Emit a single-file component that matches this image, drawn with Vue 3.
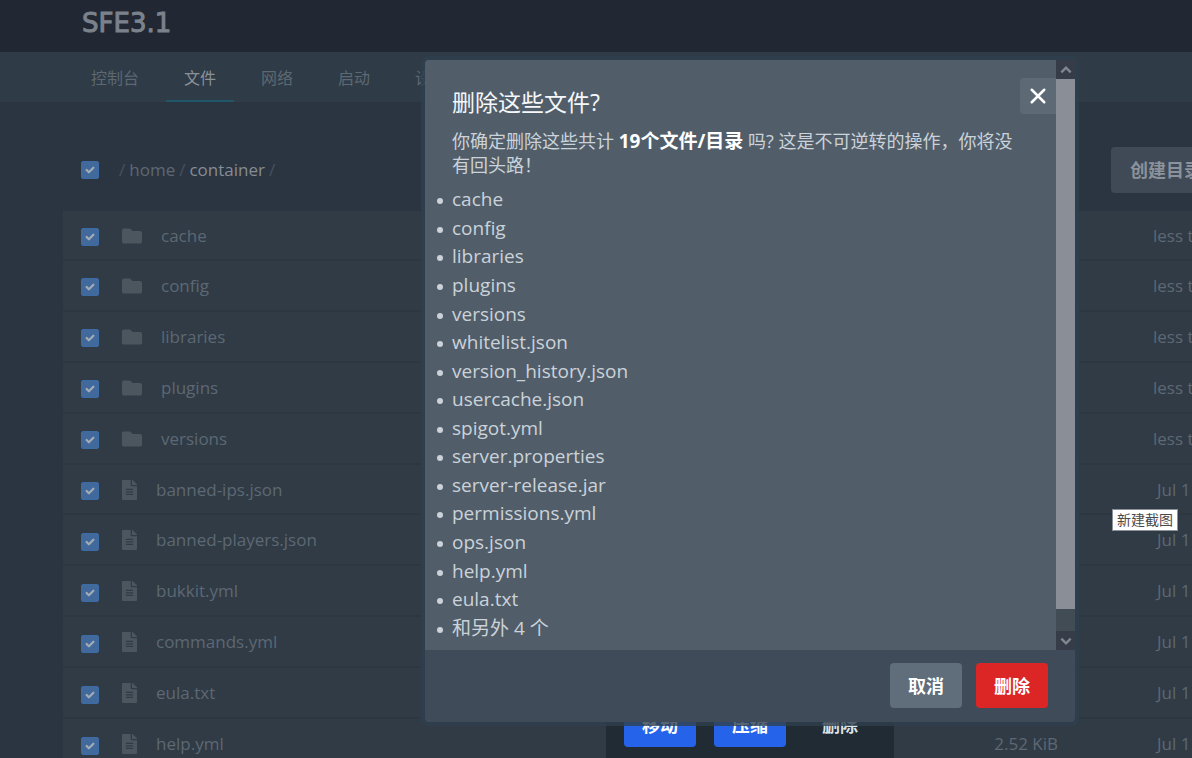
<script setup>
import { ref } from 'vue'

const tabs = ['控制台', '文件', '网络', '启动', '设置']
const activeTab = ref('文件')

const folders = ['cache', 'config', 'libraries', 'plugins', 'versions']
const plainFiles = ['banned-ips.json', 'banned-players.json', 'bukkit.yml', 'commands.yml', 'eula.txt', 'help.yml']

const entries = ref([
  ...folders.map((name) => ({ name, folder: true, size: '', date: 'less than a minute ago', checked: true })),
  ...plainFiles.map((name) => ({
    name,
    folder: false,
    size: name === 'help.yml' ? '2.52 KiB' : '',
    date: 'Jul 11th, 2021',
    checked: true,
  })),
])
const allChecked = ref(true)

const doomed = [
  'cache', 'config', 'libraries', 'plugins', 'versions', 'whitelist.json',
  'version_history.json', 'usercache.json', 'spigot.yml', 'server.properties',
  'server-release.jar', 'permissions.yml', 'ops.json', 'help.yml', 'eula.txt',
  '和另外 4 个',
]

const checkPath = 'M5.707 7.293a1 1 0 0 0-1.414 1.414l2 2a1 1 0 0 0 1.414 0l4-4a1 1 0 0 0-1.414-1.414L7 8.586 5.707 7.293z'
</script>

<template>
  <div class="page">
    <header class="topbar">
      <a class="brand" href="#">SFE3.1</a>
    </header>

    <nav class="tabs">
      <a v-for="tab in tabs" :key="tab" href="#" class="tab" :class="{ active: tab === activeTab }" @click.prevent="activeTab = tab">{{ tab }}</a>
    </nav>

    <main class="content">
      <div class="toolbar">
        <label class="check">
          <input v-model="allChecked" type="checkbox" aria-label="全选">
          <svg v-if="allChecked" viewBox="0 0 16 16" aria-hidden="true"><path :d="checkPath" /></svg>
        </label>
        <div class="crumbs">
          <span class="slash">/</span>
          <a href="#">home</a>
          <span class="slash">/</span>
          <a href="#" class="current">container</a>
          <span class="slash">/</span>
        </div>
        <button type="button" class="create">创建目录</button>
      </div>

      <table class="files">
        <tbody>
          <tr v-for="entry in entries" :key="entry.name">
            <td class="cell-check">
              <label class="check">
                <input v-model="entry.checked" type="checkbox" :aria-label="entry.name">
                <svg v-if="entry.checked" viewBox="0 0 16 16" aria-hidden="true"><path :d="checkPath" /></svg>
              </label>
            </td>
            <td class="cell-name">
              <a href="#" class="entry" :class="{ folder: entry.folder }">
                <svg v-if="entry.folder" class="icon-folder" viewBox="0 64 512 384" aria-hidden="true">
                  <path d="M464 128H272l-64-64H48C21.49 64 0 85.49 0 112v288c0 26.51 21.49 48 48 48h416c26.51 0 48-21.49 48-48V176c0-26.51-21.49-48-48-48z" />
                </svg>
                <svg v-else class="icon-file" viewBox="0 0 384 512" aria-hidden="true">
                  <path d="M224 136V0H24C10.7 0 0 10.7 0 24v464c0 13.3 10.7 24 24 24h336c13.3 0 24-10.7 24-24V160H248c-13.2 0-24-10.8-24-24zm64 236c0 6.600-5.400 12-12 12H108c-6.600 0-12-5.400-12-12v-8c0-6.600 5.400-12 12-12h168c6.600 0 12 5.400 12 12v8zm0-64c0 6.600-5.400 12-12 12H108c-6.600 0-12-5.400-12-12v-8c0-6.600 5.400-12 12-12h168c6.600 0 12 5.400 12 12v8zm0-72v8c0 6.600-5.400 12-12 12H108c-6.600 0-12-5.400-12-12v-8c0-6.600 5.400-12 12-12h168c6.600 0 12 5.400 12 12zm96-114.100v6.100H256V0h6.100c6.400 0 12.500 2.500 17 7l97.900 98c4.500 4.500 7 10.600 7 16.900z" />
                </svg>
                <span>{{ entry.name }}</span>
              </a>
            </td>
            <td class="cell-size">{{ entry.size }}</td>
            <td class="cell-date" :class="{ dated: !entry.folder }">{{ entry.date }}</td>
          </tr>
        </tbody>
      </table>
    </main>

    <div class="layer layer-bottom">
      <div class="bulk">
        <button type="button" class="btn blue">移动</button>
        <button type="button" class="btn blue">压缩</button>
        <button type="button" class="btn bare">删除</button>
      </div>
    </div>

    <div class="layer layer-modal">
      <section class="modal" role="dialog" aria-labelledby="dialog-title">
        <div class="modal-main">
          <div class="modal-body">
            <button type="button" class="close" aria-label="关闭">
              <svg viewBox="0 0 16 16" aria-hidden="true"><path d="M3 3l10 10M13 3L3 13" /></svg>
            </button>
            <h2 id="dialog-title">删除这些文件?</h2>
            <p>你确定删除这些共计 <strong>19个文件/目录</strong> 吗? 这是不可逆转的操作，你将没有回头路！</p>
            <ul>
              <li v-for="item in doomed" :key="item">{{ item }}</li>
            </ul>
          </div>
          <div class="scrollbar" aria-hidden="true">
            <div class="arrow"><svg viewBox="0 0 12 12"><path d="M2 8l4-4 4 4" /></svg></div>
            <div class="track"><div class="thumb"></div></div>
            <div class="arrow"><svg viewBox="0 0 12 12"><path d="M2 4l4 4 4-4" /></svg></div>
          </div>
        </div>
        <footer class="modal-foot">
          <button type="button" class="btn grey">取消</button>
          <button type="button" class="btn red">删除</button>
        </footer>
      </section>
    </div>

    <div class="tip" role="tooltip">新建截图</div>
  </div>
</template>

<style>
body {
  margin: 0;
  background: #2b3541;
}
</style>

<style scoped>
.page {
  position: relative;
  height: 100vh;
  overflow: hidden;
  background: #2b3541;
  color: #5d6873;
  font-family: "Open Sans", "Noto Sans CJK SC", sans-serif;
  font-size: 17px;
  line-height: 24px;
}
a {
  color: inherit;
  text-decoration: none;
}
button {
  border: 0;
  padding: 0;
  font: inherit;
  cursor: pointer;
}
.topbar {
  display: flex;
  align-items: center;
  height: 52px;
  padding: 0 82px;
  background: #212833;
}
.brand {
  margin-bottom: 6px;
  color: #7b828b;
  font-family: "DejaVu Sans", sans-serif;
  font-size: 26px;
  line-height: 32px;
  -webkit-text-stroke: 1px #7b828b;
}
.tabs {
  display: flex;
  gap: 9px;
  height: 50px;
  padding: 0 73px;
  background: #2f3b46;
  font-size: 16px;
}
.tab {
  box-sizing: border-box;
  padding: 14px 18px 0;
  border-bottom: 2px solid transparent;
}
.tab.active {
  border-color: #205769;
  color: #8a9199;
}
.content {
  padding-left: 63px;
}
.toolbar {
  display: flex;
  align-items: center;
  padding: 45px 0 18px 18px;
}
.check {
  position: relative;
  display: block;
  width: 18px;
  height: 18px;
}
.check input {
  appearance: none;
  display: block;
  width: 18px;
  height: 18px;
  margin: 0;
  border: 1px solid #3c6ba6;
  border-radius: 2px;
}
.check input:checked {
  background: #41699b;
}
.check svg {
  position: absolute;
  inset: 0;
  fill: #a3abb5;
  pointer-events: none;
}
.crumbs {
  display: flex;
  flex: 1;
  gap: 4px;
  padding-left: 20px;
}
.crumbs .slash {
  color: #46515c;
}
.crumbs .current {
  color: #858c94;
}
.create {
  flex: none;
  box-sizing: border-box;
  width: 110px;
  height: 46px;
  margin-right: -29px;
  border-radius: 4px;
  background: #3f4a56;
  color: #8b929b;
  font-size: 18px;
  font-weight: 700;
}
.files {
  width: 100%;
  height: calc(100vh - 199px);
  border-collapse: collapse;
  table-layout: fixed;
}
.files tr {
  background: #303b46;
  border-bottom: 2px solid #2c3742;
}
.files td {
  padding: 1px 0 0;
  white-space: nowrap;
}
.cell-check {
  width: 59px;
}
.files .cell-check {
  padding: 4px 0 0 18px;
  box-sizing: border-box;
}
.cell-size {
  width: 100px;
  text-align: right;
}
.cell-date {
  width: 134px;
}
.files .cell-date {
  box-sizing: border-box;
  padding-left: 95px;
}
.files .cell-date.dated {
  padding-left: 99px;
}
.entry {
  display: flex;
  align-items: center;
  gap: 19px;
}
.entry svg {
  fill: #4b565f;
}
.icon-folder {
  width: 20px;
  height: 16px;
}
.icon-file {
  width: 15px;
  height: 20px;
}
.layer {
  position: absolute;
  inset: 0 0 0 308px;
  display: flex;
  justify-content: center;
  pointer-events: none;
}
.layer > * {
  pointer-events: auto;
}
.layer-bottom {
  align-items: flex-end;
}
.bulk {
  display: flex;
  gap: 18px;
  padding: 11px 18px;
  background: #212b34;
}
.btn {
  padding: 11px 18px 10px;
  border-radius: 4px;
  color: #fff;
  font-size: 18px;
  font-weight: 700;
}
.blue {
  background: #2563eb;
}
.bare {
  background: transparent;
  color: #dfe2e6;
}
.grey {
  background: #606d7a;
}
.red {
  background: #dc2626;
}
.layer-modal {
  padding: 60px 0 36px;
}
.modal {
  display: flex;
  flex-direction: column;
  width: 650px;
  border-radius: 4px;
  background: #3f4b58;
  box-shadow: 0 0 0 4px rgba(48, 64, 77, 0.8);
}
.modal-main {
  display: flex;
  flex: 1;
}
.modal-body {
  position: relative;
  display: flex;
  flex: 1;
  flex-direction: column;
  padding: 26px 27px 8px;
  border-radius: 4px 0 0;
  background: #515e6a;
  color: #cbd2d9;
  font-size: 19px;
}
.modal-body h2 {
  margin: 0;
  color: #f5f7fa;
  font-size: 23px;
  font-weight: 400;
  line-height: 32px;
}
.modal-body p {
  margin: 11px 6px 8px 0;
  font-size: 18px;
}
.modal-body strong {
  color: #fff;
  font-size: 19px;
}
.modal-body ul {
  display: grid;
  flex: 1;
  grid-auto-rows: 1fr;
  align-items: center;
  margin: 0;
  padding: 0;
  list-style: none;
}
.modal-body li::before {
  content: "";
  display: inline-block;
  width: 6px;
  height: 6px;
  margin: 0 9px 2px -15px;
  border-radius: 50%;
  background: #cbd2d9;
}
.close {
  position: absolute;
  top: 18px;
  right: 0;
  display: grid;
  place-items: center;
  width: 36px;
  height: 36px;
  border-radius: 4px 0 0 4px;
  background: #5d6a76;
}
.close svg {
  width: 20px;
  height: 20px;
  fill: none;
  stroke: #fff;
  stroke-width: 2;
  stroke-linecap: round;
}
.scrollbar {
  display: flex;
  flex-direction: column;
  width: 19px;
}
.arrow {
  display: grid;
  place-items: center;
  height: 19px;
  background: #363c48;
}
.arrow svg {
  width: 14px;
  height: 14px;
  fill: none;
  stroke: #838890;
  stroke-width: 2;
}
.track {
  flex: 1;
  background: #414c55;
}
.thumb {
  height: 96%;
  background: #898e97;
}
.modal-foot {
  display: flex;
  justify-content: flex-end;
  gap: 14px;
  padding: 13px 27px 14px;
}
.tip {
  position: absolute;
  top: 509px;
  left: 1112px;
  padding: 0 4px;
  border: 1px solid #8d9298;
  background: #fff;
  color: #4a4a4a;
  font-size: 14px;
  line-height: 20px;
}
</style>
